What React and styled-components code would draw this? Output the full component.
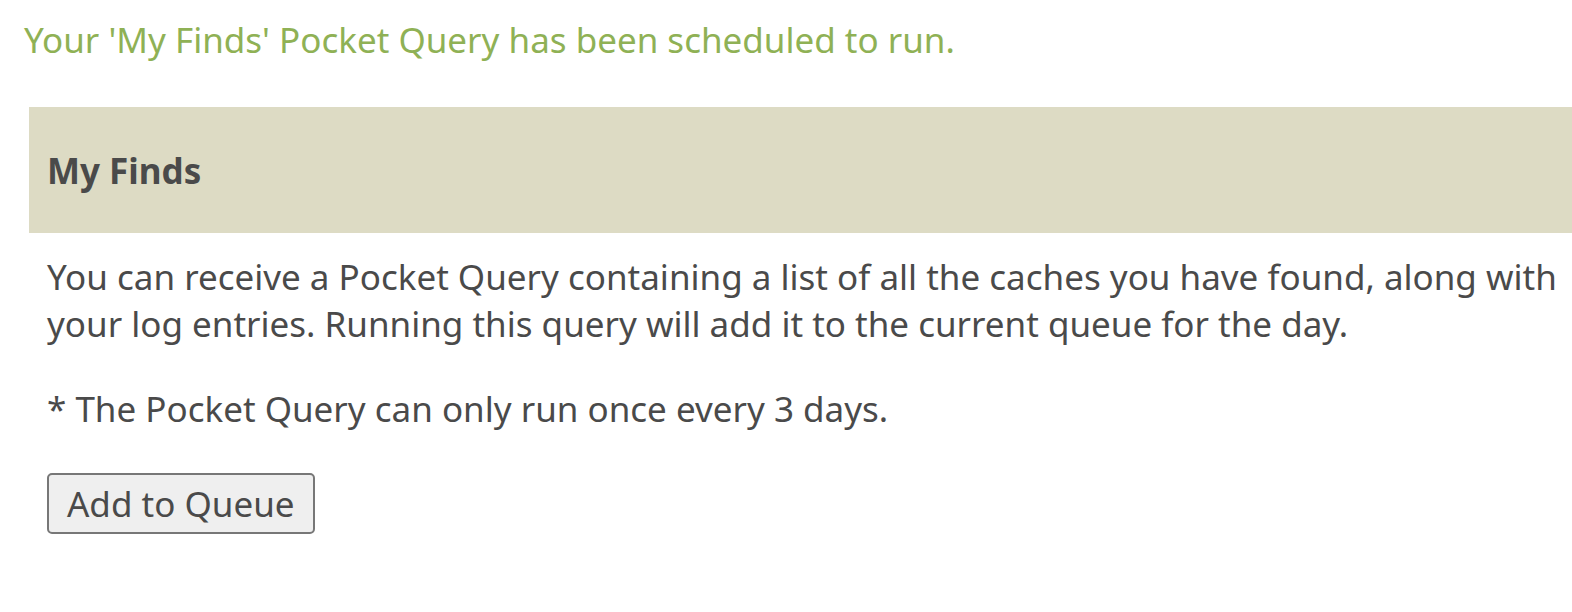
import React from "react";
import styled, { createGlobalStyle } from "styled-components";

const Global = createGlobalStyle`
  html, body { margin: 0; padding: 0; background: #fff; }
  body { font-family: "Noto Sans", "Open Sans", sans-serif; color: #4a4a4a; overflow: hidden; }
`;

const Page = styled.div`
  width: 1572px;
  height: 612px;
  overflow: hidden;
  padding: 16px 0 0 24px;
  box-sizing: border-box;
`;

const Notice = styled.p`
  margin: 0;
  color: #8fb155;
  font-size: 35px;
  line-height: 47px;
`;

const Panel = styled.section`
  margin: 44px -60px 0 5px;
`;

const PanelHeader = styled.h2`
  margin: 0;
  background: #dddbc4;
  height: 126px;
  display: flex;
  align-items: center;
  padding: 0 18px;
  font-size: 35px;
  font-weight: 700;
  color: #4a4a4a;
`;

const PanelBody = styled.div`
  padding: 20px 18px 0;
`;

const Para = styled.p`
  margin: 0 0 38px;
  font-size: 35px;
  line-height: 47px;
  width: 1540px;
`;

const Actions = styled.div`
  padding-top: 3px;
`;

const Button = styled.button`
  font-family: inherit;
  font-size: 35px;
  color: #4a4a4a;
  background: #efefef;
  border: 2px solid #777;
  border-radius: 5px;
  height: 61px;
  padding: 0 18px;
  line-height: 1;
  cursor: pointer;
`;

export default function App() {
  return (
    <>
      <Global />
      <Page>
        <Notice>Your 'My Finds' Pocket Query has been scheduled to run.</Notice>
        <Panel>
          <PanelHeader>My Finds</PanelHeader>
          <PanelBody>
            <Para>
              You can receive a Pocket Query containing a list of all the caches you have found, along with
              your log entries. Running this query will add it to the current queue for the day.
            </Para>
            <Para>* The Pocket Query can only run once every 3 days.</Para>
            <Actions>
              <Button>Add to Queue</Button>
            </Actions>
          </PanelBody>
        </Panel>
      </Page>
    </>
  );
}
